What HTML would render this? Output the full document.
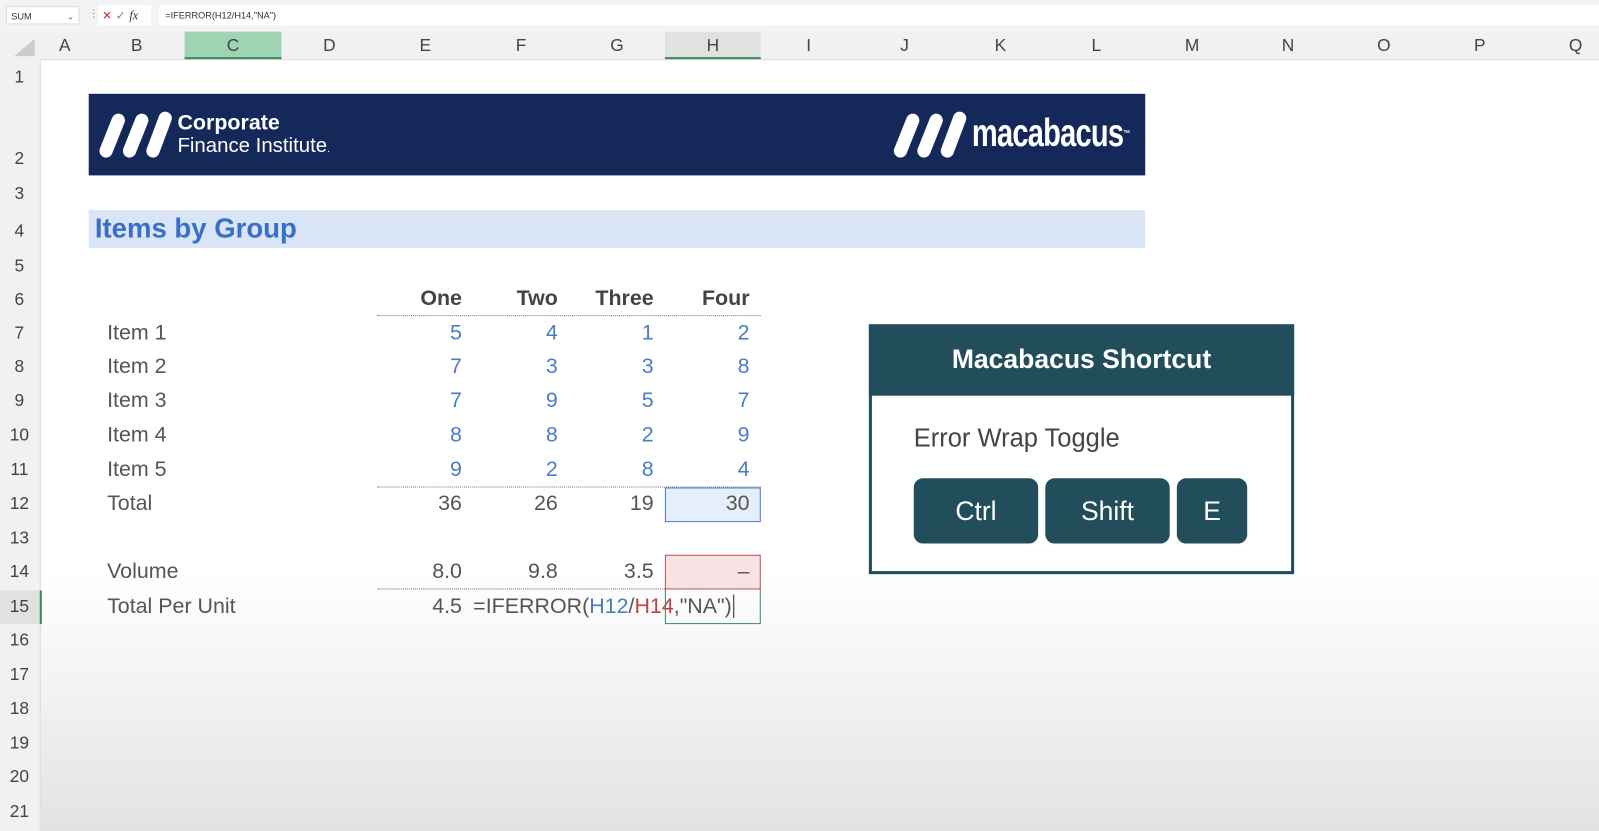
<!DOCTYPE html>
<html><head><meta charset="utf-8"><style>
html,body{margin:0;padding:0;width:1599px;height:831px;overflow:hidden;background:#fff}
#w{position:absolute;left:0;top:0;width:1568px;height:815px;transform:scale(1.0198);transform-origin:0 0;font-family:"Liberation Sans",sans-serif;background:linear-gradient(#fff 0,#fff 560px,#f2f2f2 680px,#e2e2e2 815px);overflow:hidden}
.a{position:absolute;white-space:nowrap}
.ch{position:absolute;top:31px;height:27px;line-height:27px;text-align:center;font-size:17px;color:#444}
.rh{position:absolute;left:0;width:38px;text-align:center;font-size:17px;color:#444}
.c{position:absolute;font-size:21px;color:#555;white-space:nowrap}
.b{color:#4a7dc4}
.key{position:absolute;top:469px;height:64px;background:#214e5a;border-radius:9px;color:#fff;font-size:26px;line-height:64px;text-align:center}
</style></head><body><div id="w">
<div class="a" style="left:0;top:0;width:1568px;height:31px;background:#f3f3f3"></div>
<div class="a" style="left:6px;top:6px;width:72px;height:18px;border:1px solid #ddd;background:#fff;font-size:9px;line-height:18px;padding-left:4px;color:#333;box-sizing:border-box">SUM<span style="position:absolute;right:4px;color:#666">⌄</span></div>
<div class="a" style="left:87px;top:8px;font-size:10px;color:#666">⋮</div>
<div class="a" style="left:96px;top:5px;width:52px;height:20px;background:#fff;font-size:12px;line-height:20px"><span style="color:#c33;margin-left:4px">✕</span> <span style="color:#5a5">✓</span> <i style="font-family:'Liberation Serif',serif;color:#333">fx</i></div>
<div class="a" style="left:156px;top:5px;width:1412px;height:20px;background:#fff;font-size:9px;line-height:20px;padding-left:6px;color:#333">=IFERROR(H12/H14,"NA")</div>
<div class="a" style="left:0;top:31px;width:1568px;height:27px;background:#f1f1f1;border-bottom:1px solid #ddd"></div>
<div class="a" style="left:181px;top:31px;width:95px;height:27px;background:#9fd3b3;border-bottom:2px solid #3c8a5a;box-sizing:border-box"></div>
<div class="a" style="left:652px;top:31px;width:94px;height:27px;background:#e1e1e1;border-bottom:2px solid #3c8a5a;box-sizing:border-box"></div>
<div class="a" style="left:14px;top:38px;width:0;height:0;border-left:20px solid transparent;border-bottom:17px solid #ccc"></div>
<div class="ch" style="left:40px;width:47px">A</div><div class="ch" style="left:87px;width:94px">B</div><div class="ch" style="left:181px;width:95px">C</div><div class="ch" style="left:276px;width:94px">D</div><div class="ch" style="left:370px;width:94px">E</div><div class="ch" style="left:464px;width:94px">F</div><div class="ch" style="left:558px;width:94px">G</div><div class="ch" style="left:652px;width:94px">H</div><div class="ch" style="left:746px;width:94px">I</div><div class="ch" style="left:840px;width:94px">J</div><div class="ch" style="left:934px;width:94px">K</div><div class="ch" style="left:1028px;width:94px">L</div><div class="ch" style="left:1122px;width:94px">M</div><div class="ch" style="left:1216px;width:94px">N</div><div class="ch" style="left:1310px;width:94px">O</div><div class="ch" style="left:1404px;width:94px">P</div><div class="ch" style="left:1498px;width:94px">Q</div>
<div class="a" style="left:0;top:58px;width:39px;height:757px;background:#f1f1f1;border-right:1px solid #ddd"></div>
<div class="a" style="left:0;top:579px;width:39px;height:33px;background:#e1e1e1;border-right:2px solid #3c8a5a"></div>
<div class="rh" style="top:66px">1</div><div class="rh" style="top:146px">2</div><div class="rh" style="top:180px">3</div><div class="rh" style="top:217px">4</div><div class="rh" style="top:251px">5</div><div class="rh" style="top:284px">6</div><div class="rh" style="top:317px">7</div><div class="rh" style="top:350px">8</div><div class="rh" style="top:383px">9</div><div class="rh" style="top:417px">10</div><div class="rh" style="top:451px">11</div><div class="rh" style="top:484px">12</div><div class="rh" style="top:518px">13</div><div class="rh" style="top:551px">14</div><div class="rh" style="top:585px">15</div><div class="rh" style="top:618px">16</div><div class="rh" style="top:652px">17</div><div class="rh" style="top:685px">18</div><div class="rh" style="top:719px">19</div><div class="rh" style="top:752px">20</div><div class="rh" style="top:786px">21</div>
<div class="a" style="left:87px;top:92px;width:1036px;height:80px;background:#14295a"></div>
<svg class="a" style="left:94px;top:106px" width="78" height="52"><g stroke="#fff" stroke-width="13" stroke-linecap="round"><line x1="10" y1="42" x2="22" y2="12"/><line x1="33" y1="42" x2="45" y2="12"/><line x1="56" y1="42" x2="68" y2="10"/></g></svg>
<div class="a" style="left:174px;top:109px;color:#fff;font-size:21px;font-weight:bold;line-height:24px">Corporate</div>
<div class="a" style="left:174px;top:132px;color:#fff;font-size:20px;line-height:22px">Finance Institute<span style="font-size:10px">.</span></div>
<svg class="a" style="left:873px;top:108px" width="78" height="50"><g stroke="#fff" stroke-width="13" stroke-linecap="round"><line x1="10" y1="40" x2="22" y2="10"/><line x1="33" y1="40" x2="45" y2="10"/><line x1="56" y1="40" x2="68" y2="8"/></g></svg>
<div class="a" style="left:953px;top:108px;color:#fff;font-size:38px;font-weight:bold;letter-spacing:-1px;transform:scaleX(0.75);transform-origin:0 0;line-height:46px">macabacus<span style="font-size:9px;vertical-align:top">™</span></div>
<div class="a" style="left:87px;top:206px;width:1036px;height:37px;background:#d9e4f5"></div>
<div class="a" style="left:93px;top:207px;font-size:27px;font-weight:bold;color:#3a6fc6;line-height:34px">Items by Group</div>
<div class="c" style="left:370px;top:281px;width:83px;text-align:right;font-weight:bold;color:#444">One</div>
<div class="c" style="left:464px;top:281px;width:83px;text-align:right;font-weight:bold;color:#444">Two</div>
<div class="c" style="left:558px;top:281px;width:83px;text-align:right;font-weight:bold;color:#444">Three</div>
<div class="c" style="left:652px;top:281px;width:83px;text-align:right;font-weight:bold;color:#444">Four</div>
<div class="a" style="left:370px;top:309px;width:376px;border-top:1px dotted #777"></div>
<div class="a" style="left:370px;top:477px;width:376px;border-top:1px dotted #777"></div>
<div class="a" style="left:370px;top:577px;width:376px;border-top:1px dotted #777"></div>
<div class="c" style="left:105px;top:315px">Item 1</div><div class="c" style="left:105px;top:348px">Item 2</div><div class="c" style="left:105px;top:381px">Item 3</div><div class="c" style="left:105px;top:415px">Item 4</div><div class="c" style="left:105px;top:449px">Item 5</div><div class="c" style="left:105px;top:482px">Total</div><div class="c" style="left:105px;top:549px">Volume</div><div class="c" style="left:105px;top:583px">Total Per Unit</div>
<div class="c b" style="left:370px;top:315px;width:83px;text-align:right">5</div><div class="c b" style="left:464px;top:315px;width:83px;text-align:right">4</div><div class="c b" style="left:558px;top:315px;width:83px;text-align:right">1</div><div class="c b" style="left:652px;top:315px;width:83px;text-align:right">2</div>
<div class="c b" style="left:370px;top:348px;width:83px;text-align:right">7</div><div class="c b" style="left:464px;top:348px;width:83px;text-align:right">3</div><div class="c b" style="left:558px;top:348px;width:83px;text-align:right">3</div><div class="c b" style="left:652px;top:348px;width:83px;text-align:right">8</div>
<div class="c b" style="left:370px;top:381px;width:83px;text-align:right">7</div><div class="c b" style="left:464px;top:381px;width:83px;text-align:right">9</div><div class="c b" style="left:558px;top:381px;width:83px;text-align:right">5</div><div class="c b" style="left:652px;top:381px;width:83px;text-align:right">7</div>
<div class="c b" style="left:370px;top:415px;width:83px;text-align:right">8</div><div class="c b" style="left:464px;top:415px;width:83px;text-align:right">8</div><div class="c b" style="left:558px;top:415px;width:83px;text-align:right">2</div><div class="c b" style="left:652px;top:415px;width:83px;text-align:right">9</div>
<div class="c b" style="left:370px;top:449px;width:83px;text-align:right">9</div><div class="c b" style="left:464px;top:449px;width:83px;text-align:right">2</div><div class="c b" style="left:558px;top:449px;width:83px;text-align:right">8</div><div class="c b" style="left:652px;top:449px;width:83px;text-align:right">4</div>
<div class="a" style="left:652px;top:478px;width:94px;height:34px;background:#e6eefb;border:1.5px solid #4a7dc4;box-sizing:border-box"></div>
<div class="c" style="left:370px;top:482px;width:83px;text-align:right">36</div><div class="c" style="left:464px;top:482px;width:83px;text-align:right">26</div><div class="c" style="left:558px;top:482px;width:83px;text-align:right">19</div><div class="c" style="left:652px;top:482px;width:83px;text-align:right">30</div>
<div class="a" style="left:652px;top:544px;width:94px;height:34px;background:#f7e3e3;border:1.5px solid #c0505a;box-sizing:border-box"></div>
<div class="c" style="left:370px;top:549px;width:83px;text-align:right">8.0</div><div class="c" style="left:464px;top:549px;width:83px;text-align:right">9.8</div><div class="c" style="left:558px;top:549px;width:83px;text-align:right">3.5</div><div class="c" style="left:652px;top:549px;width:83px;text-align:right">–</div>
<div class="a" style="left:652px;top:578px;width:94px;height:34px;border:1.5px solid #3c8a5a;border-top:none;box-sizing:border-box"></div>
<div class="c" style="left:370px;top:583px;width:83px;text-align:right">4.5</div>
<div class="c" style="left:464px;top:583px">=IFERROR(<span style="color:#4a7dc4">H12</span>/<span style="color:#c0404a">H14</span>,"NA")<span style="border-left:1.5px solid #222;margin-left:1px"></span></div>
<div class="a" style="left:852px;top:318px;width:417px;height:245px;border:3px solid #214e5a;box-sizing:border-box;background:#fff"></div>
<div class="a" style="left:852px;top:318px;width:417px;height:70px;background:#214e5a;color:#fff;font-size:26px;font-weight:bold;text-align:center;line-height:68px">Macabacus Shortcut</div>
<div class="a" style="left:896px;top:416px;font-size:25px;color:#444">Error Wrap Toggle</div>
<div class="key" style="left:896px;width:122px">Ctrl</div>
<div class="key" style="left:1025px;width:122px">Shift</div>
<div class="key" style="left:1154px;width:69px">E</div>
</div></body></html>
